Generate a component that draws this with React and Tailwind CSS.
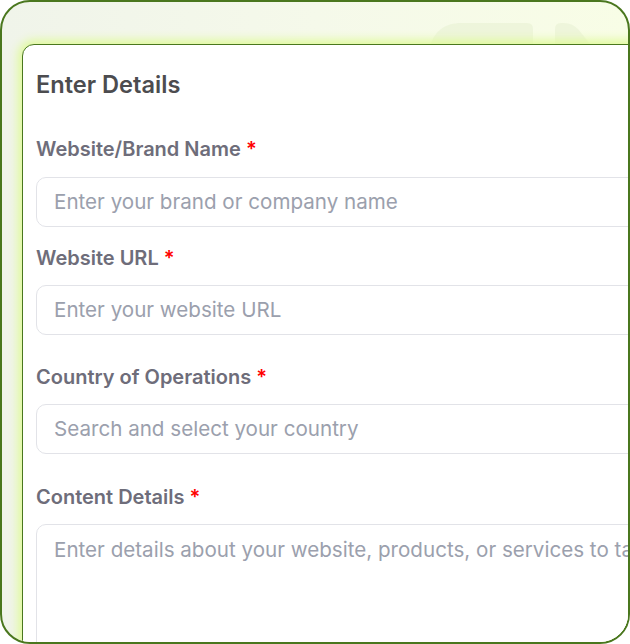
import React from "react";

const Label = ({ children, className = "" }) => (
  <label
    className={`block text-[20px] leading-6 font-semibold text-[#6e6d7a] ${className}`}
  >
    {children} <span className="text-[#ff0000]">*</span>
  </label>
);

const Field = ({ placeholder, className = "" }) => (
  <div
    className={`h-[50px] rounded-[10px] border border-[#e2e3e8] bg-white flex items-center pl-[17px] whitespace-nowrap text-[20.6px] text-[#9ba0ad] ${className}`}
  >
    {placeholder}
  </div>
);

export default function App() {
  return (
    <div
      className="w-[630px] h-[644px] bg-white"
      style={{ fontFamily: "Inter, 'Noto Sans', sans-serif" }}
    >
      <div className="relative w-[630px] h-[644px] rounded-[30px] border-2 border-[#4a771e] overflow-hidden bg-gradient-to-r from-[#f0f4ea] via-[#f5f9ea] to-[#f8fde6]">
        {/* faint shapes behind the card */}
        <svg
          className="absolute left-[420px] top-[17px]"
          width="200"
          height="30"
          viewBox="0 0 200 30"
        >
          <path
            d="M7 30 C12 12 22 4 40 4 L105 4 Q111 4 111 10 L111 30 Z"
            fill="#e9f2d6"
            opacity="0.7"
          />
          <path
            d="M133 30 L133 10 Q133 4 139 4 L142 4 Q150 4 156 10 L172 30 Z"
            fill="#e9f2d6"
            opacity="0.7"
          />
        </svg>

        <div className="absolute left-[20px] top-[42px] w-[640px] h-[640px] rounded-tl-[12px] border border-[#4a771e] bg-white shadow-[0_0_10px_4px_#e0fa9c]">
          <div className="pl-[13px] pt-[26px]">
            <h2 className="text-[23.6px] leading-7 font-semibold text-[#4c4c4f]">
              Enter Details
            </h2>

            <Label className="mt-[38px]">Website/Brand Name</Label>
            <Field
              className="mt-[16px]"
              placeholder="Enter your brand or company name"
            />

            <Label className="mt-[19px]">Website URL</Label>
            <Field className="mt-[15px]" placeholder="Enter your website URL" />

            <Label className="mt-[30px]">Country of Operations</Label>
            <Field
              className="mt-[15px]"
              placeholder="Search and select your country"
            />

            <Label className="mt-[31px]">Content Details</Label>
            <div className="mt-[15px] h-[160px] rounded-[10px] border border-[#e2e3e8] bg-white pl-[17px] pt-[11px] whitespace-nowrap text-[20.6px] leading-7 text-[#9ba0ad]">
              Enter details about your website, products, or services to target
            </div>
          </div>
        </div>
      </div>
    </div>
  );
}
